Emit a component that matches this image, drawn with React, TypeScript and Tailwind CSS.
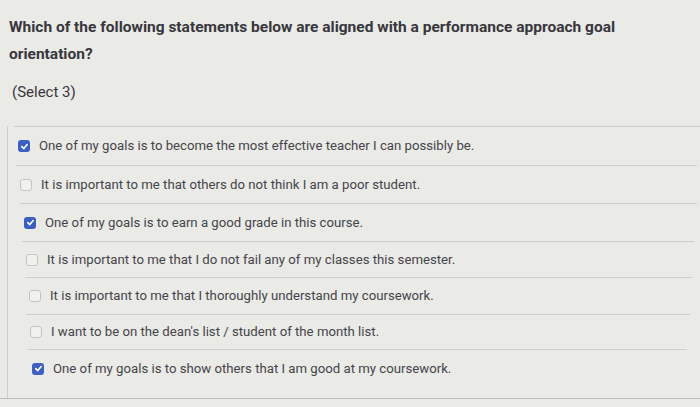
const options = [
  { text: "One of my goals is to become the most effective teacher I can possibly be.", checked: true, row: "ml-[6px] mr-0 h-[39px]" },
  { text: "It is important to me that others do not think I am a poor student.", checked: false, row: "ml-[8px] mr-[3px] h-[38px]" },
  { text: "One of my goals is to earn a good grade in this course.", checked: true, row: "ml-[12px] mr-[3px] h-[38px]" },
  { text: "It is important to me that I do not fail any of my classes this semester.", checked: false, row: "ml-[14px] mr-[6px] h-[36px]" },
  { text: "It is important to me that I thoroughly understand my coursework.", checked: false, row: "ml-[17px] mr-[8px] h-[37px]" },
  { text: "I want to be on the dean's list / student of the month list.", checked: false, row: "ml-[18px] mr-[10px] h-[35px]" },
  { text: "One of my goals is to show others that I am good at my coursework.", checked: true, row: "ml-[20px] mr-[13px] h-[38px]" },
];

function Checkbox({ checked }: { checked: boolean }) {
  if (checked) {
    return (
      <span className="w-[12px] h-[12px] rounded-[3px] bg-[#3d5fc4] flex items-center justify-center shrink-0">
        <svg width="9" height="9" viewBox="0 0 10 10">
          <path d="M2 5.2 L4.2 7.3 L8 2.8" fill="none" stroke="#fff" strokeWidth="1.8" strokeLinecap="round" strokeLinejoin="round" />
        </svg>
      </span>
    );
  }
  return <span className="w-[12px] h-[12px] rounded-[3px] border border-[#c4c4c2] bg-[#f1f1ef] shrink-0" />;
}

export default function App() {
  return (
    <div className="w-[700px] h-[407px] overflow-hidden bg-[#eaeae6] font-['Roboto',sans-serif]">
      <div className="h-[399px] border-b border-[#bdbdb9] flex flex-col">
        {/* Question */}
        <div className="pl-[9px] pr-4 pt-[14px]">
          <h1 className="text-[15.5px] leading-[27px] font-bold text-[#37373d]">
            Which of the following statements below are aligned with a performance approach goal orientation?
          </h1>
          <p className="mt-[12px] pl-[3px] text-[15px] leading-[24px] text-[#38383d]">(Select 3)</p>
        </div>

        {/* Options */}
        <div className="mt-[22px] ml-[7px] flex-1 border-l border-[#cdcdc9]">
          {options.map((o, i) => (
            <div key={i} className={`${o.row} border-t border-[#cfcfcb] flex items-center pl-[4px] gap-[9px]`}>
              <Checkbox checked={o.checked} />
              <span className="text-[13.2px] text-[#45454b] whitespace-nowrap">{o.text}</span>
            </div>
          ))}
        </div>
      </div>
    </div>
  );
}
